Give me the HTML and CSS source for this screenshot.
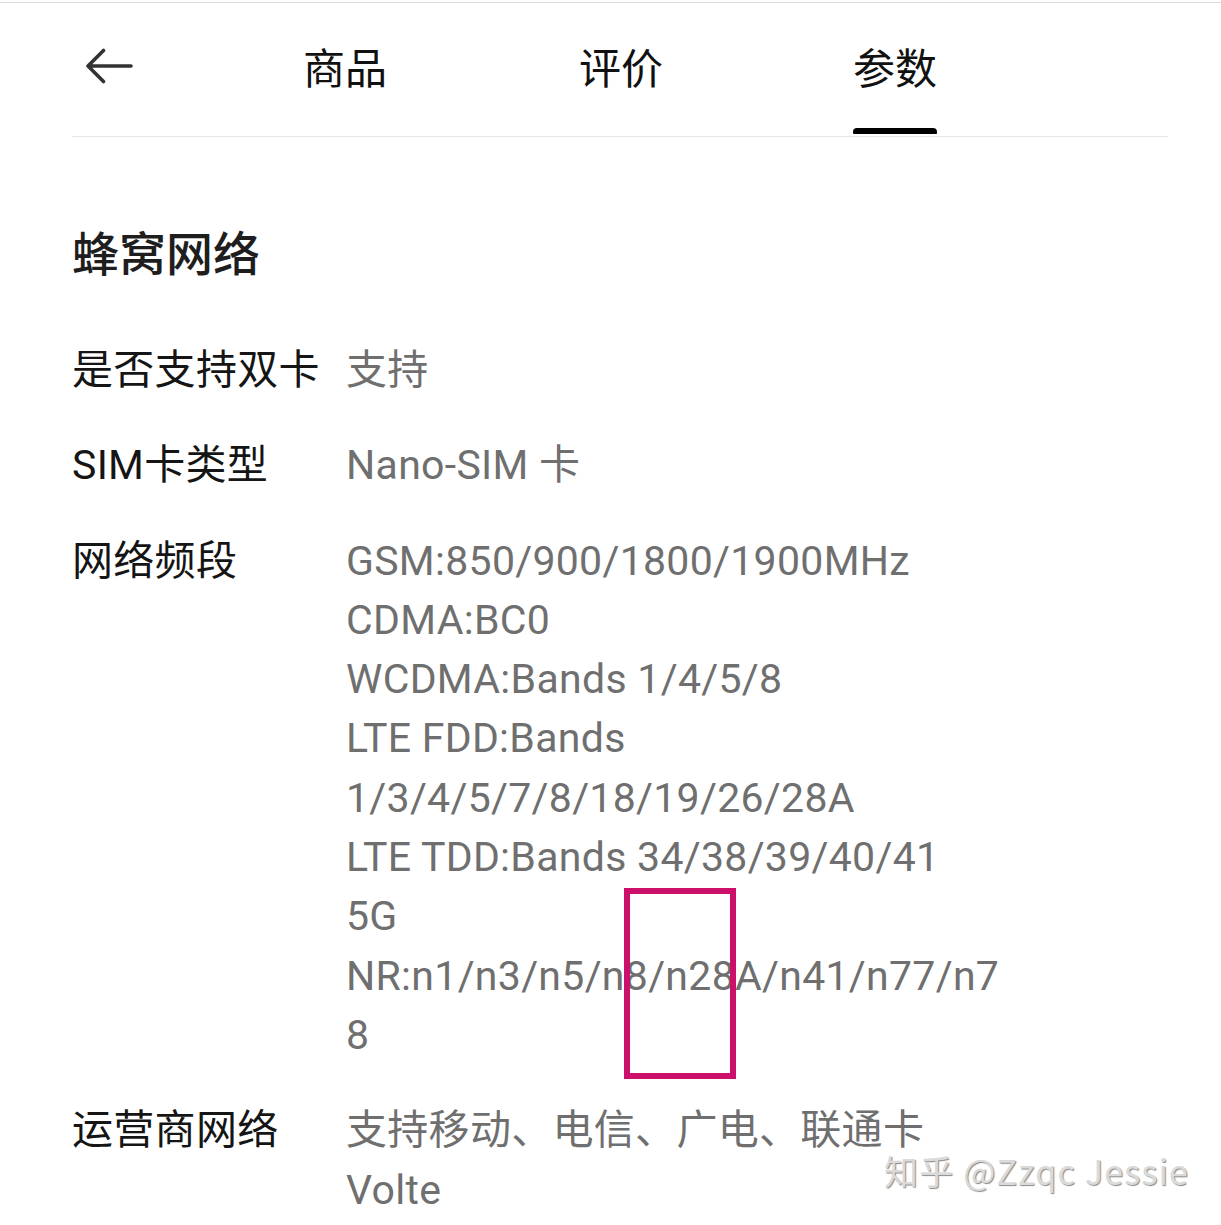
FILE: index.html
```html
<!DOCTYPE html>
<html lang="zh-CN">
<head>
<meta charset="utf-8">
<title>参数</title>
<link rel="stylesheet" href="styles.css">
</head>
<body>
<div class="page">
  <div class="status-line"></div>
  <header class="topbar">
    <div class="back">
      <svg class="back-icon" width="48" height="36" viewBox="0 0 48 36" aria-hidden="true">
        <path d="M3 18 H46 M3 18 L18.5 2.5 M3 18 L18.5 33.5" fill="none" stroke="#333" stroke-width="3.6" stroke-linecap="round" stroke-linejoin="round"/>
      </svg>
    </div>
    <nav class="tabs">
      <div class="tab"><span class="tab-label">商品</span><span class="tab-bar"></span></div>
      <div class="tab"><span class="tab-label">评价</span><span class="tab-bar"></span></div>
      <div class="tab tab-active"><span class="tab-label">参数</span><span class="tab-bar"></span></div>
    </nav>
  </header>
  <div class="divider"></div>

  <main class="content">
    <h2 class="section-title">蜂窝网络</h2>
    <div class="spec-list">
      <div class="spec-row">
        <div class="spec-label">是否支持双卡</div>
        <div class="spec-value">支持</div>
      </div>
      <div class="spec-row">
        <div class="spec-label">SIM卡类型</div>
        <div class="spec-value">Nano-SIM 卡</div>
      </div>
      <div class="spec-row">
        <div class="spec-label">网络频段</div>
        <div class="spec-value">GSM:850/900/1800/1900MHz<br>CDMA:BC0<br>WCDMA:Bands 1/4/5/8<br>LTE FDD:Bands<br>1/3/4/5/7/8/18/19/26/28A<br>LTE TDD:Bands 34/38/39/40/41<br>5G<br>NR:n1/n3/n5/n8/n28A/n41/n77/n7<br>8</div>
      </div>
      <div class="spec-row">
        <div class="spec-label">运营商网络</div>
        <div class="spec-value">支持移动、电信、广电、联通卡<br>Volte</div>
      </div>
    </div>
  </main>

  <div class="highlight-box"></div>
  <div class="watermark">知乎 @Zzqc Jessie</div>
</div>
</body>
</html>
```

FILE: styles.css
```css
html, body {
  margin: 0;
  padding: 0;
  background: #ffffff;
}

.page {
  position: relative;
  width: 1221px;
  height: 1225px;
  overflow: hidden;
  font-family: Roboto, "Noto Sans CJK SC", sans-serif;
  color: #222;
}

.status-line {
  height: 2px;
  border-bottom: 1px solid #dcdcdc;
}

.topbar {
  display: flex;
  height: 133px;
  padding-left: 72px;
}

.back {
  width: 135px;
  display: flex;
  align-items: flex-start;
}

.back-icon {
  display: block;
  margin-left: 13px;
  margin-top: 45px;
}

.tabs {
  display: flex;
}

.tab {
  width: 276px;
  display: flex;
  flex-direction: column;
  align-items: center;
  padding-top: 35px;
  box-sizing: border-box;
}

.tab-label {
  font-family: "Noto Sans CJK SC", sans-serif;
  font-size: 42px;
  line-height: 56px;
  color: #111;
}

.tab-bar {
  display: block;
  width: 84px;
  height: 6px;
  margin-top: 34px;
  border-radius: 4px 4px 1px 1px;
  background: transparent;
}

.tab-active .tab-label {
  margin-left: -4px;
}

.tab-active .tab-bar {
  background: #000;
  margin-left: -4px;
}

.divider {
  height: 1px;
  margin: 0 53px 0 72px;
  background: #e6e6e6;
}

.content {
  padding-left: 72px;
  padding-top: 78px;
}

.section-title {
  margin: 0;
  font-family: "Noto Sans CJK SC", sans-serif;
  font-size: 47px;
  line-height: 72px;
  font-weight: 500;
  color: #1e1e1e;
}

.spec-list {
  display: flex;
  flex-direction: column;
  gap: 36px;
  margin-top: 54px;
}

.spec-row {
  display: flex;
  align-items: flex-start;
  font-size: 41px;
  line-height: 59.3px;
}

.spec-row-last {
  margin-top: 1px;
}

.spec-label {
  width: 274px;
  flex: none;
  color: #151515;
  font-weight: 400;
  letter-spacing: 0.3px;
  white-space: nowrap;
}

.spec-value {
  color: #6f6f6f;
  letter-spacing: 0.3px;
  white-space: nowrap;
}

.highlight-box {
  position: absolute;
  left: 624px;
  top: 888px;
  width: 112px;
  height: 191px;
  box-sizing: border-box;
  border: 6px solid #cc0f6b;
}

.watermark {
  position: absolute;
  left: 884px;
  top: 1146px;
  font-family: "Noto Sans CJK SC", sans-serif;
  font-size: 34px;
  line-height: 50px;
  letter-spacing: 1.2px;
  color: #dadada;
  text-shadow: 1px 1px 1px #8a8a8a;
  white-space: nowrap;
}
```
